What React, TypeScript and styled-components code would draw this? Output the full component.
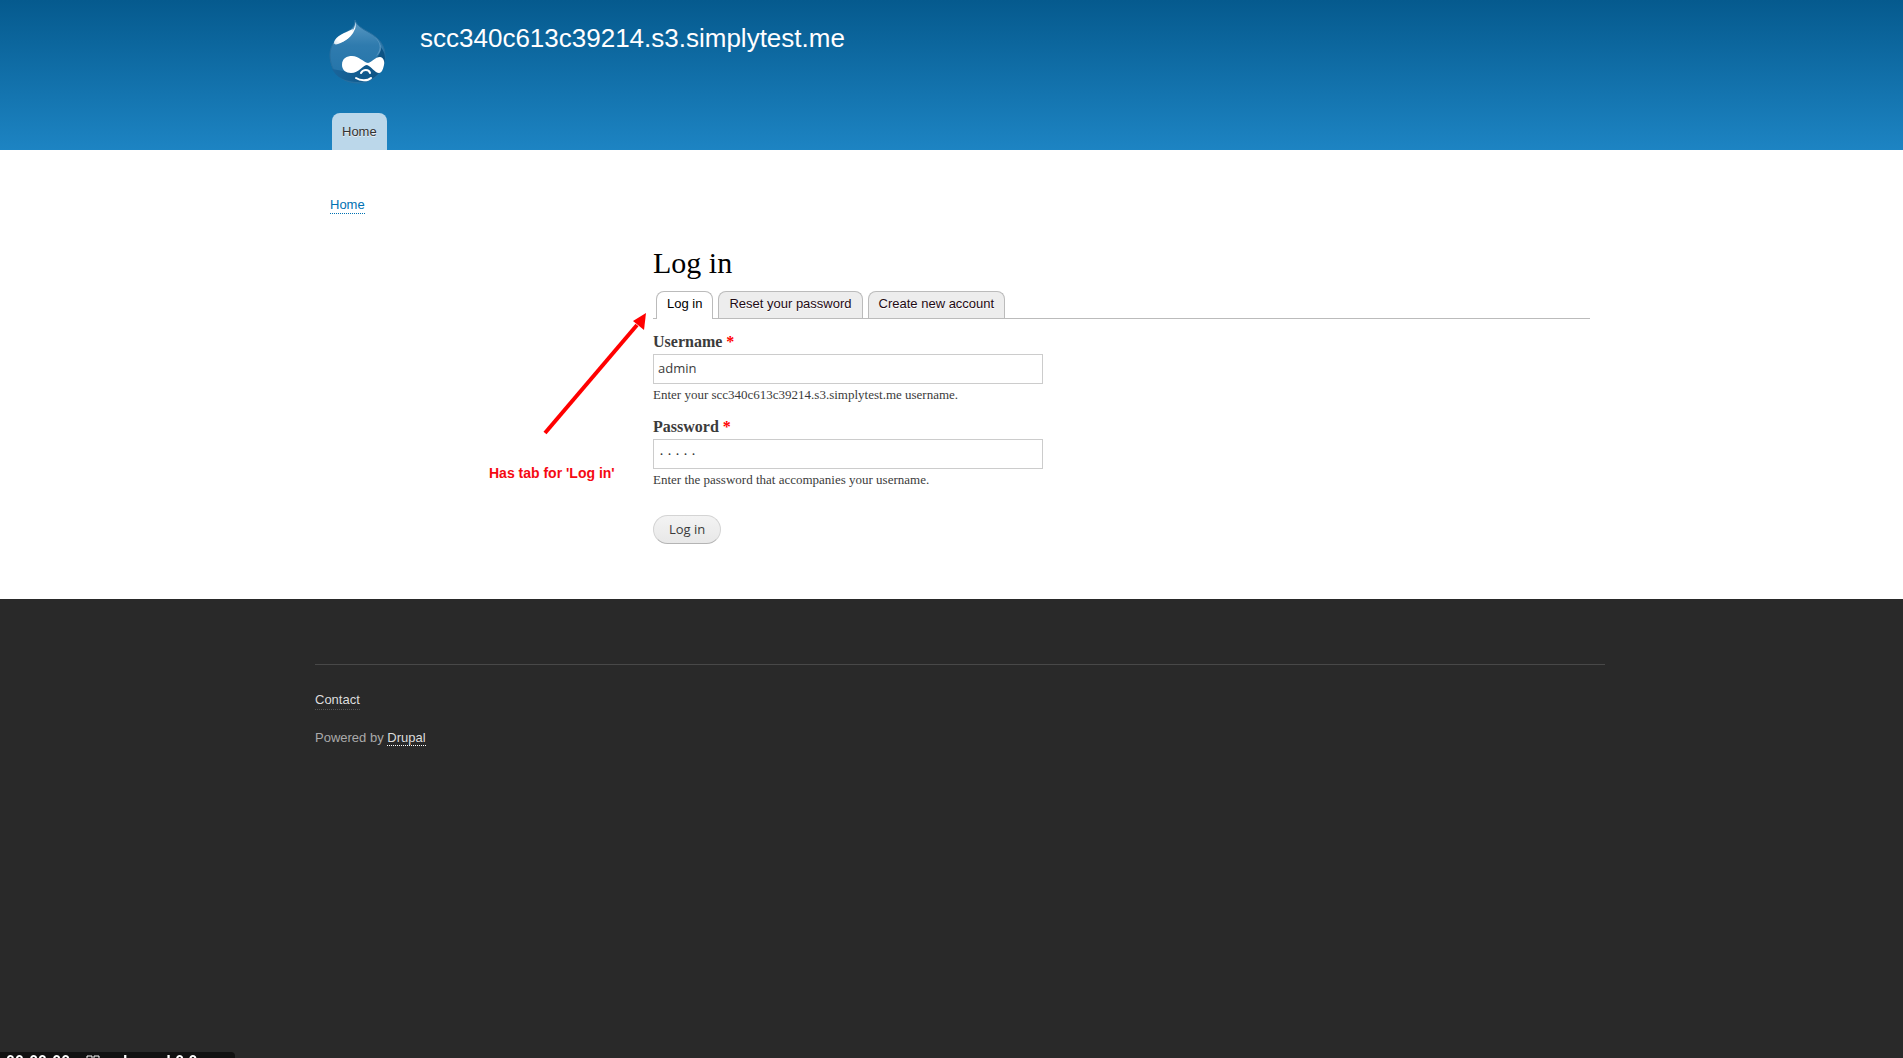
import React from "react";
import styled, { createGlobalStyle } from "styled-components";

const sans = '"Liberation Sans", Arial, sans-serif';
const serif = '"Liberation Serif", "Times New Roman", serif';
const ui = '"Open Sans", "Noto Sans", sans-serif';

const GlobalStyle = createGlobalStyle`
  *, *::before, *::after { box-sizing: border-box; }
  body { margin: 0; background: #fff; color: #3b3b3b; font-family: ${serif}; }
`;

const Page = styled.div`
  display: flex;
  flex-direction: column;
  min-height: 100vh;
  overflow: hidden;
`;

const Container = styled.div`
  width: 100%;
  max-width: 1290px;
  margin: 0 auto;
`;

const Header = styled.header`
  padding-left: 17px;
  background: linear-gradient(to bottom, #055a8e 0%, #1d84c3 100%);
`;

const HeaderInner = styled(Container)`
  display: flex;
  flex-direction: column;
  padding: 19px 15px 0 14px;
`;

const Branding = styled.div`
  display: flex;
  align-items: flex-start;
  gap: 34px;
`;

const LogoLink = styled.a`
  display: block;
  width: 57px;
  height: 65px;
`;

const SiteName = styled.a`
  margin-top: 4px;
  color: #fffeff;
  font: 26px/30px ${sans};
  text-decoration: none;
`;

const Nav = styled.nav`
  display: flex;
  margin-top: 29px;
  padding-left: 3px;
`;

const NavTab = styled.a`
  padding: 0 10px;
  border-radius: 8px 8px 0 0;
  background: #bbd7ea;
  color: #333;
  font: 13px/37px ${sans};
  text-decoration: none;
  text-shadow: 0 1px #eee;
`;

const Main = styled.main`
  padding-left: 17px;
  background: #fff;
`;

const MainInner = styled(Container)`
  padding: 46px 15px 55px;
`;

const Breadcrumb = styled.nav`
  display: flex;
  font: 13px/17px ${sans};
`;

const CrumbLink = styled.a`
  border-bottom: 1px dotted #0071b3;
  color: #0071b3;
  text-decoration: none;
`;

const Content = styled.section`
  position: relative;
  margin: 31px 0 0 323px;
`;

const Title = styled.h1`
  margin: 0;
  color: #000;
  font: 30px/36px ${serif};
`;

const Tabs = styled.nav`
  display: flex;
  gap: 5px;
  margin-top: 10px;
  padding-left: 3px;
  border-bottom: 1px solid #bbb;
`;

const Tab = styled.a<{ $active?: boolean }>`
  height: ${(p) => (p.$active ? 28 : 27)}px;
  margin-bottom: ${(p) => (p.$active ? -1 : 0)}px;
  padding: 0 10px;
  border: 1px solid #bbb;
  border-bottom: 0;
  border-radius: 8px 8px 0 0;
  background: ${(p) => (p.$active ? "#fff" : "#ededed")};
  color: ${(p) => (p.$active ? "#000" : "#1f0a14")};
  font: 13px/24px ${sans};
  text-decoration: none;
  text-shadow: 0 1px #fff;
`;

const Form = styled.form`
  display: flex;
  flex-direction: column;
  align-items: flex-start;
  padding-top: 13px;
`;

const Field = styled.div`
  display: flex;
  flex-direction: column;
  width: 390px;
  max-width: 100%;
  margin-bottom: 13px;
`;

const Label = styled.label`
  margin-bottom: 2px;
  font: bold 16px/20px ${serif};
`;

const Required = styled.span`
  color: #f00;
`;

const TextInput = styled.input`
  width: 100%;
  height: 30px;
  padding: 0 4px 2px;
  border: 1px solid #ccc;
  border-radius: 0;
  background: #fff;
  color: #3b3b3b;
  font: 13px/20px ${ui};
  outline: 0;
`;

const PasswordInput = styled(TextInput)`
  padding-left: 6px;
  font-size: 8px;
  letter-spacing: 5px;
`;

const Hint = styled.div`
  margin-top: 2px;
  font: 13px/18px ${serif};
  white-space: nowrap;
`;

const Submit = styled.button`
  height: 29px;
  margin-top: 13px;
  padding: 0 15px 2px;
  border: 1px solid #d4d4d4;
  border-bottom-color: #b4b4b4;
  border-radius: 15px;
  background: linear-gradient(to bottom, #f3f3f3, #e8e8e8);
  color: #3a3a3a;
  font: 13px/20px ${ui};
`;

const Callout = styled.div`
  position: absolute;
  top: 68px;
  left: -164px;
  width: 160px;
  color: #f50a12;
  font: bold 14px/18px ${sans};
  white-space: nowrap;
`;

const Arrow = styled.svg`
  display: block;
  width: 106px;
  height: 122px;
  margin: 0 0 29px 54px;
`;

const Footer = styled.footer`
  flex: 1;
  padding: 65px 0 0 17px;
  background: #292929;
`;

const FooterInner = styled(Container)`
  display: flex;
  flex-direction: column;
  align-items: flex-start;
  gap: 19px;
  padding-top: 26px;
  border-top: 1px solid #484848;
  color: #aaa;
  font: 13px/18px ${sans};
`;

const FooterText = styled.p`
  margin: 0;
`;

const FooterLink = styled.a<{ $quiet?: boolean }>`
  display: inline-block;
  border-bottom: 1px dotted ${(p) => (p.$quiet ? "#555" : "#fff")};
  color: #ddd;
  line-height: ${(p) => (p.$quiet ? 18 : 14)}px;
  text-decoration: none;
`;

const Recorder = styled.div`
  position: fixed;
  bottom: 0;
  left: 0;
  display: flex;
  gap: 16px;
  width: 235px;
  height: 6px;
  padding: 3px 6px 0;
  overflow: hidden;
  border-radius: 0 4px 0 0;
  background: #111;
  color: #fff;
  font: bold 16px/14px ${sans};
`;

const WindowIcon = styled.svg`
  width: 14px;
  height: 10px;
  margin-right: 7px;
`;

const RecorderLetter = styled.span`
  width: 22px;
`;

function Druplicon() {
  return (
    <svg viewBox="0 0 57 65" width="57" height="65" role="img" aria-label="Home">
      <defs>
        <linearGradient id="drop" x1="0" y1="0" x2="0" y2="1">
          <stop offset="0" stopColor="#5b9ac4" />
          <stop offset=".4" stopColor="#2f7bae" />
          <stop offset="1" stopColor="#2273a9" />
        </linearGradient>
        <linearGradient id="shade" x1="0" y1="0" x2="1" y2="0">
          <stop offset="0" stopColor="#1a659b" />
          <stop offset="1" stopColor="#0b5283" />
        </linearGradient>
        <linearGradient id="shine" x1="1" y1="0" x2="0" y2="1">
          <stop offset="0" stopColor="#fff" />
          <stop offset=".75" stopColor="#fff" />
          <stop offset="1" stopColor="#cfe2ef" />
        </linearGradient>
      </defs>
      <path d="M26 1C28 7 34 10 41 14C51 20 56 27 56 37C56 53 44 64 29 64C12 64 1 52 1 36C1 27 6 20 14 15C20 11 26 10 26 1Z" fill="url(#drop)" stroke="#286f9f" />
      <path d="M51 27C55 32 56 35 56 40C54 54 44 63 29 63C16 63 7 58 3 50L20 53L40 45C48 40 53 34 51 27Z" fill="url(#shade)" />
      <path d="M42 15C52 22 53 30 47 37C53 33 53 28 51 25C49 20 46 18 42 15Z" fill="#73a9ce" opacity=".6" />
      <path d="M26 3C27 12 20 14 13 18C7 21 3 29 5 24C3 26 6 25 8 24C17 23 23 17 25 12C27 9 27 6 26 3Z" fill="url(#shine)" />
      <path d="M5 23C7 17 15 14 24 10C23 17 16 23 9 25C6 26 5 25 5 23Z" fill="url(#shine)" />
      <path d="M13 46C13 39 18 37 23 37C30 37 34 43 39 44C43 43 46 38 51 38C54 38 56 42 55 46C54 50 53 54 50 54C46 54 42 47 38 46C34 46 30 54 22 54C17 54 13 51 13 46Z" fill="#fff" />
      <path d="M32 54C34 50 40 50 41 54M27 59C31 62 39 62 42 59" fill="none" stroke="#fff" strokeWidth="2" strokeLinecap="round" />
    </svg>
  );
}

export default function App() {
  return (
    <Page>
      <GlobalStyle />
      <Header>
        <HeaderInner>
          <Branding>
            <LogoLink href="#"><Druplicon /></LogoLink>
            <SiteName href="#">scc340c613c39214.s3.simplytest.me</SiteName>
          </Branding>
          <Nav aria-label="Main">
            <NavTab href="#">Home</NavTab>
          </Nav>
        </HeaderInner>
      </Header>
      <Main>
        <MainInner>
          <Breadcrumb aria-label="Breadcrumb">
            <CrumbLink href="#">Home</CrumbLink>
          </Breadcrumb>
          <Content>
            <Title>Log in</Title>
            <Tabs aria-label="Account">
              <Tab href="#" $active aria-current="page">Log in</Tab>
              <Tab href="#">Reset your password</Tab>
              <Tab href="#">Create new account</Tab>
            </Tabs>
            <Form onSubmit={(e) => e.preventDefault()}>
              <Field>
                <Label htmlFor="name">Username <Required>*</Required></Label>
                <TextInput id="name" type="text" defaultValue="admin" />
                <Hint>Enter your scc340c613c39214.s3.simplytest.me username.</Hint>
              </Field>
              <Field>
                <Label htmlFor="pass">Password <Required>*</Required></Label>
                <PasswordInput id="pass" type="password" defaultValue="admin" />
                <Hint>Enter the password that accompanies your username.</Hint>
              </Field>
              <Submit type="submit">Log in</Submit>
            </Form>
            <Callout>
              <Arrow viewBox="0 0 106 122" aria-hidden="true">
                <path d="M2 120L94 12" stroke="#f00" strokeWidth="4" fill="none" />
                <path d="M103 0L90 8L101 17Z" fill="#f00" />
              </Arrow>
              Has tab for 'Log in'
            </Callout>
          </Content>
        </MainInner>
      </Main>
      <Footer>
        <FooterInner>
          <FooterLink href="#" $quiet>Contact</FooterLink>
          <FooterText>Powered by <FooterLink href="#">Drupal</FooterLink></FooterText>
        </FooterInner>
      </Footer>
      <Recorder>
        <span>00:00:00</span>
        <WindowIcon viewBox="0 0 14 10" aria-hidden="true">
          <path d="M1 10V1H6V10M8 10V1H13V10" fill="none" stroke="#fff" />
        </WindowIcon>
        <RecorderLetter>l</RecorderLetter>
        <span>d 0.0</span>
      </Recorder>
    </Page>
  );
}
